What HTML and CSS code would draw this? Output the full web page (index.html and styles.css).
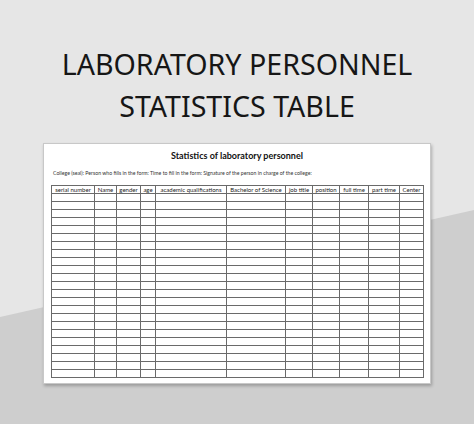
FILE: index.html
```html
<!DOCTYPE html>
<html lang="en">
<head>
<meta charset="utf-8">
<title>Laboratory Personnel Statistics Table</title>
<link rel="stylesheet" href="styles.css">
</head>
<body>
<main class="poster">
  <h1 class="headline">LABORATORY PERSONNEL<br>STATISTICS TABLE</h1>
  <section class="sheet">
    <h2 class="sheet-title">Statistics of laboratory personnel</h2>
    <p class="sheet-meta">College (seal): Person who fills in the form: Time to fill in the form: Signature of the person in charge of the college:</p>
    <table class="grid">
      <colgroup>
        <col style="width:43px"><col style="width:22px"><col style="width:24px"><col style="width:15px"><col style="width:71px"><col style="width:59px"><col style="width:27px"><col style="width:27px"><col style="width:29px"><col style="width:31px"><col style="width:24px">
      </colgroup>
      <thead>
        <tr><th>serial number</th><th>Name</th><th>gender</th><th>age</th><th>academic qualifications</th><th>Bachelor of Science</th><th>job title</th><th>position</th><th>full time</th><th>part time</th><th>Center</th></tr>
      </thead>
      <tbody id="rows"></tbody>
    </table>
  </section>
</main>
<script src="app.js"></script>
</body>
</html>
```
FILE: app.js
```js
const body = document.getElementById('rows');
for (let r = 0; r < 23; r++) {
  const tr = document.createElement('tr');
  for (let c = 0; c < 11; c++) tr.appendChild(document.createElement('td'));
  body.appendChild(tr);
}
```
FILE: styles.css
```css
html, body {
  margin: 0;
  padding: 0;
}
body {
  width: 474px;
  height: 424px;
  overflow: hidden;
  background: #e6e6e6;
  font-family: "Noto Sans", sans-serif;
}
.poster {
  position: relative;
  width: 474px;
  height: 424px;
  display: flex;
  flex-direction: column;
  align-items: flex-start;
}
.poster::before {
  content: "";
  position: absolute;
  inset: 0;
  background: #cecece;
  clip-path: polygon(0 317px, 100% 210px, 100% 100%, 0 100%);
}
.headline {
  position: relative;
  align-self: stretch;
  margin: 43px 0 0;
  text-align: center;
  font-weight: 400;
  font-size: 28.6px;
  line-height: 42px;
  color: #161616;
  letter-spacing: 0;
}
.sheet {
  position: relative;
  box-sizing: border-box;
  margin: 16px 0 0 43px;
  width: 388px;
  height: 241px;
  background: #fff;
  border: 1px solid #c8c8c8;
  box-shadow: 1px 2px 3px rgba(0,0,0,0.25);
  padding: 6px 7px 0;
  display: flex;
  flex-direction: column;
}
.sheet-title {
  margin: 0;
  text-align: center;
  font-family: Lato, sans-serif;
  font-weight: 700;
  font-size: 9px;
  line-height: 12px;
  color: #111;
}
.sheet-meta {
  margin: 8px 0 0 2px;
  font-family: Lato, sans-serif;
  font-size: 5.2px;
  line-height: 6px;
  color: #333;
  white-space: nowrap;
}
.grid {
  margin-top: 9px;
  border-collapse: collapse;
  table-layout: fixed;
  width: 372px;
  font-family: Lato, sans-serif;
}
.grid th, .grid td {
  border: 1px solid #6a6a6a;
  padding: 0;
  height: 8px;
  box-sizing: border-box;
}
.grid th {
  font-weight: 400;
  font-size: 6px;
  line-height: 6px;
  color: #222;
  text-align: center;
  vertical-align: bottom;
  white-space: nowrap;
  overflow: hidden;
}
```
